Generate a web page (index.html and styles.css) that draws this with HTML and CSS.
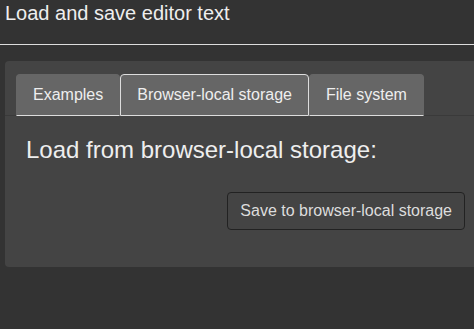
FILE: index.html
```html
<!DOCTYPE html>
<html lang="en">
<head>
    <meta charset="UTF-8">
    <meta name="viewport" content="width=device-width, initial-scale=1.0">
    <title>Load and save editor text</title>
    <link rel="stylesheet" href="styles.css">
</head>
<body>
    <h1 class="page-title">Load and save editor text</h1>
    <hr class="title-rule">
    <div class="panel">
        <div class="tab-bar">
            <button class="tab">Examples</button>
            <button class="tab active">Browser-local storage</button>
            <button class="tab">File system</button>
        </div>
        <div class="tab-body">
            <h2 class="section-title">Load from browser-local storage:</h2>
            <div class="actions">
                <button class="save-btn">Save to browser-local storage</button>
            </div>
        </div>
    </div>
</body>
</html>
```

FILE: styles.css
```css
body {
    font-family: "Liberation Sans", Arial, sans-serif;
    margin: 0;
    background-color: #333;
    color: #eee;
    overflow: hidden;
}
.page-title {
    font-size: 20px;
    font-weight: normal;
    margin: 0;
    padding: 2px 5px 0;
    height: 42px;
}
.title-rule {
    border: none;
    border-top: 1px solid #ddd;
    margin: 0;
}
.panel {
    margin: 16px -10px 0 5px;
    height: 206px;
    background-color: #444;
    border-radius: 4px;
    box-sizing: border-box;
    padding-top: 13px;
}
.tab-bar {
    display: flex;
    padding-left: 11px;
    border-bottom: 1px solid #3a3a3a;
}
.tab {
    font-family: inherit;
    font-size: 16px;
    color: #eee;
    background-color: #666;
    border: 1px solid #666;
    border-bottom: 1px solid #ddd;
    border-radius: 4px 4px 0 0;
    height: 42px;
    padding: 0 16px;
    margin-bottom: -1px;
}
.tab.active {
    border-color: #ddd;
}
.tab-body {
    padding: 20px 10px 0 21px;
}
.section-title {
    font-size: 24px;
    font-weight: normal;
    margin: 0;
}
.actions {
    display: flex;
    justify-content: flex-end;
    margin-top: 28px;
    padding-right: 9px;
}
.save-btn {
    font-family: inherit;
    font-size: 16px;
    color: #ddd;
    background-color: #444;
    border: 1px solid #222;
    border-radius: 4px;
    height: 38px;
    padding: 0 12px;
}
```
